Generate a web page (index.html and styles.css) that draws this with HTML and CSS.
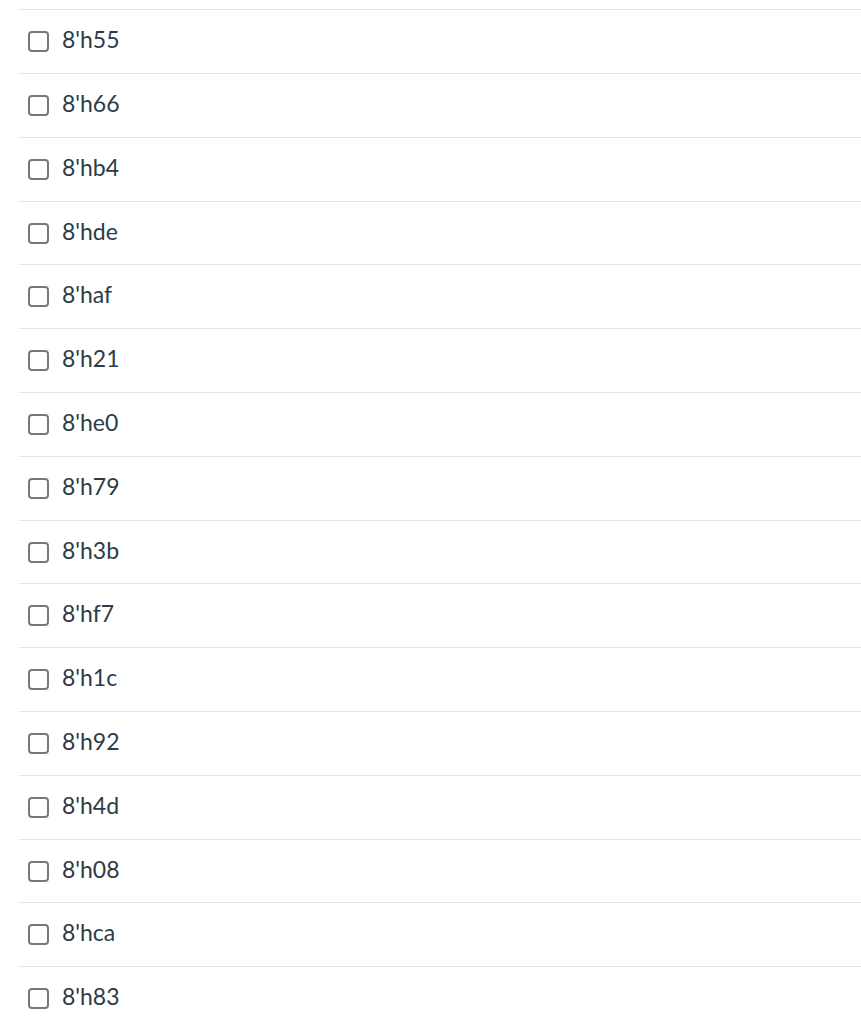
FILE: index.html
```html
<!DOCTYPE html>
<html>
<head>
<meta charset="utf-8">
<link rel="stylesheet" href="styles.css">
</head>
<body>
<ul class="answers">
<li class="answer"><span class="box"></span><span class="label">8'h55</span></li>
<li class="answer"><span class="box"></span><span class="label">8'h66</span></li>
<li class="answer"><span class="box"></span><span class="label">8'hb4</span></li>
<li class="answer"><span class="box"></span><span class="label">8'hde</span></li>
<li class="answer"><span class="box"></span><span class="label">8'haf</span></li>
<li class="answer"><span class="box"></span><span class="label">8'h21</span></li>
<li class="answer"><span class="box"></span><span class="label">8'he0</span></li>
<li class="answer"><span class="box"></span><span class="label">8'h79</span></li>
<li class="answer"><span class="box"></span><span class="label">8'h3b</span></li>
<li class="answer"><span class="box"></span><span class="label">8'hf7</span></li>
<li class="answer"><span class="box"></span><span class="label">8'h1c</span></li>
<li class="answer"><span class="box"></span><span class="label">8'h92</span></li>
<li class="answer"><span class="box"></span><span class="label">8'h4d</span></li>
<li class="answer"><span class="box"></span><span class="label">8'h08</span></li>
<li class="answer"><span class="box"></span><span class="label">8'hca</span></li>
<li class="answer"><span class="box"></span><span class="label">8'h83</span></li>
</ul>
</body>
</html>
```
FILE: styles.css
```css
html, body {
  margin: 0;
  padding: 0;
  background: #ffffff;
}
body {
  font-family: Lato, "Liberation Sans", sans-serif;
  color: #2d3b45;
}
.answers {
  list-style: none;
  margin: 0 0 0 19px;
  padding: 9.3px 0 0 0;
}
.answer {
  display: flex;
  align-items: center;
  box-sizing: border-box;
  height: 63.8px;
  border-top: 1px solid #e2e4e6;
  padding-left: 9px;
}
.box {
  box-sizing: border-box;
  width: 21px;
  height: 21px;
  border: 2px solid #76797c;
  border-radius: 4px;
  flex: none;
}
.label {
  margin-left: 13px;
  margin-bottom: 4px;
  font-size: 23px;
  line-height: 1;
}
```
